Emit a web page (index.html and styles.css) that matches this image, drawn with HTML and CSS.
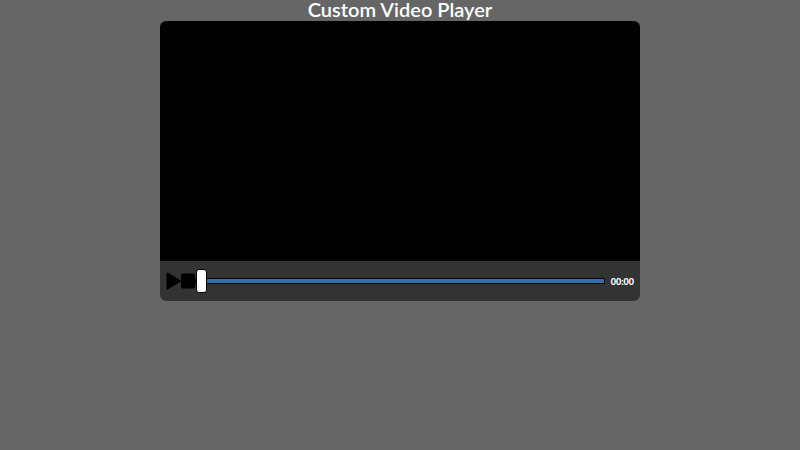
FILE: index.html
```html
<!DOCTYPE html>
<html lang="en">
<head>
  <meta charset="UTF-8" />
  <meta name="viewport" content="width=device-width, initial-scale=1" />
  <title>Custom Video Player</title>
  <link rel="stylesheet" href="styles.css">
</head>
<body>
  <h1>Custom Video Player</h1>
  <video id="video" class="screen"></video>
  <div class="controls">
    <button class="btn" id="play" aria-label="Play">
      <svg width="15" height="18" viewBox="0 0 15 18"><path d="M1.5 1.5 L14 9 L1.5 16.5 Z" stroke="#000" stroke-width="2" stroke-linejoin="round"/></svg>
    </button>
    <button class="btn" id="stop" aria-label="Stop">
      <svg width="14" height="18" viewBox="0 0 14 18"><rect x="0" y="1.5" width="14" height="15" rx="1.5"/></svg>
    </button>
    <input type="range" id="progress" class="progress" min="0" max="100" step="0.1" value="0" aria-label="Progress">
    <span class="timestamp" id="timestamp">00:00</span>
  </div>

  <script src="script.js"></script>
</body>
</html>
```
FILE: styles.css
```css
* {
  box-sizing: border-box;
}
body {
  font-family: Lato, sans-serif;
  background: #666;
  display: flex;
  flex-direction: column;
  align-items: center;
  min-height: 100vh;
  margin: 0;
}
h1 {
  color: #fff;
  font-size: 20px;
  font-weight: 600;
  line-height: 19px;
  margin: 0 0 2px;
}
.screen {
  display: block;
  width: 60%;
  aspect-ratio: 2 / 1;
  background: #000;
  border-radius: 6px 6px 0 0;
  cursor: pointer;
}
.controls {
  display: flex;
  align-items: center;
  width: 60%;
  height: 40px;
  padding: 0 6px;
  background: #333;
  color: #fff;
  border-radius: 0 0 6px 6px;
}
.btn {
  display: flex;
  padding: 0;
  border: 0;
  background: transparent;
  cursor: pointer;
}
.progress {
  -webkit-appearance: none;
  appearance: none;
  flex: 1;
  min-width: 0;
  height: 24px;
  margin: 0;
  background: transparent;
}
.progress::-webkit-slider-runnable-track {
  height: 6px;
  background: #3071a9;
  border: 1px solid #000;
  border-radius: 1px;
  cursor: pointer;
}
.progress::-webkit-slider-thumb {
  -webkit-appearance: none;
  width: 11px;
  height: 24px;
  margin-top: -10px;
  background: #fff;
  border: 1px solid #000;
  border-radius: 3px;
}
.timestamp {
  margin-left: 6px;
  font-size: 9px;
  font-weight: 900;
}
```
FILE: script.js
```js
const video = document.getElementById('video');
const play = document.getElementById('play');
const stop = document.getElementById('stop');
const progress = document.getElementById('progress');
const timestamp = document.getElementById('timestamp');

function toggleVideo() {
  if (video.paused) {
    video.play();
  } else {
    video.pause();
  }
}

function updateProgress() {
  progress.value = (video.currentTime / video.duration) * 100;

  const mins = String(Math.floor(video.currentTime / 60)).padStart(2, '0');
  const secs = String(Math.floor(video.currentTime % 60)).padStart(2, '0');
  timestamp.innerText = mins + ':' + secs;
}

function setProgress() {
  if (video.duration) {
    video.currentTime = (progress.value * video.duration) / 100;
  }
}

function stopVideo() {
  video.currentTime = 0;
  video.pause();
}

video.addEventListener('click', toggleVideo);
video.addEventListener('timeupdate', updateProgress);
play.addEventListener('click', toggleVideo);
stop.addEventListener('click', stopVideo);
progress.addEventListener('change', setProgress);
```
